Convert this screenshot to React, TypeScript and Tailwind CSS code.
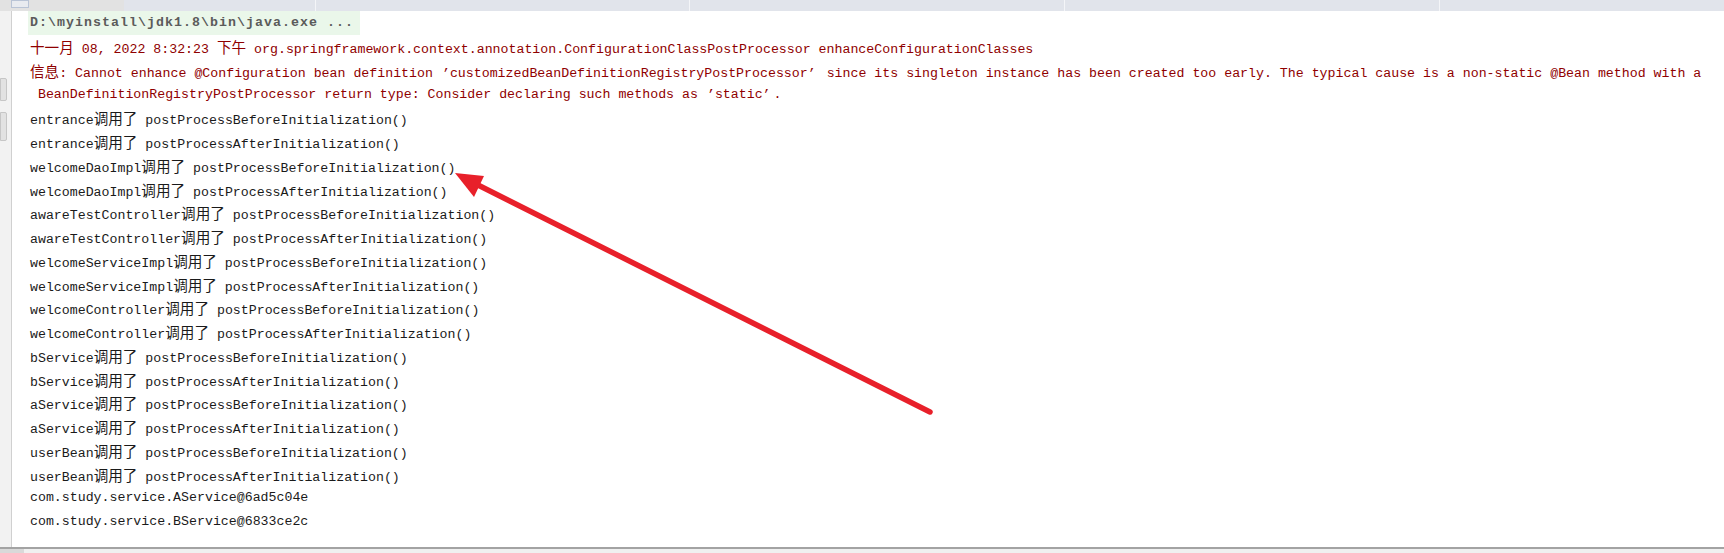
const CJK_RE = /([\u3000-\u9fff\uff00-\uffef]+|\u2018|\u2019)/;

// split a console line so that CJK runs get the wider CJK font
const Seg = ({ text }: { text: string }) => (
  <>
    {text.split(CJK_RE).map((part, i) => {
      if (i % 2 === 0) return <span key={i}>{part}</span>;
      if (part === "\u2018")
        return (
          <span key={i} className="inline-block w-[9px] text-right">
            ’
          </span>
        );
      if (part === "\u2019")
        return (
          <span key={i} className="inline-block w-[11px] text-left">
            ’
          </span>
        );
      return (
        <span key={i} className="font-['Noto_Sans_CJK_SC',sans-serif] text-[14.6px]">
          {part}
        </span>
      );
    })}
  </>
);

const redLines = [
  "十一月 08, 2022 8:32:23 下午 org.springframework.context.annotation.ConfigurationClassPostProcessor enhanceConfigurationClasses",
  "信息: Cannot enhance @Configuration bean definition \u2018customizedBeanDefinitionRegistryPostProcessor\u2019 since its singleton instance has been created too early. The typical cause is a non-static @Bean method with a",
  " BeanDefinitionRegistryPostProcessor return type: Consider declaring such methods as \u2018static\u2019.",
];

const beans = [
  "entrance",
  "welcomeDaoImpl",
  "awareTestController",
  "welcomeServiceImpl",
  "welcomeController",
  "bService",
  "aService",
  "userBean",
];

const outLines = [
  ...beans.flatMap((b) => [
    `${b}调用了 postProcessBeforeInitialization()`,
    `${b}调用了 postProcessAfterInitialization()`,
  ]),
  "com.study.service.AService@6ad5c04e",
  "com.study.service.BService@6833ce2c",
];

export default function App() {
  return (
    <div className="relative w-[1724px] h-[553px] bg-white flex flex-col overflow-hidden font-['Liberation_Mono',monospace] text-[13.25px]">
      {/* Tab strip */}
      <div className="h-[11px] flex shrink-0">
        <div className="w-[124px] bg-[#e2e2e2] pl-[11px]">
          <div className="w-[18px] h-[8px] border border-[#b9c4d6] bg-[#e8ebf0]" />
        </div>
        <div className="w-[191px] bg-[#e1e4eb]" />
        <div className="w-[374px] bg-[#e1e4eb] border-l border-[#f4f5f8]" />
        <div className="w-[375px] bg-[#e1e4eb] border-l border-[#f4f5f8]" />
        <div className="w-[375px] bg-[#e1e4eb] border-l border-[#f4f5f8]" />
        <div className="flex-1 bg-[#e1e4eb] border-l border-[#f4f5f8]" />
      </div>

      <div className="flex flex-1 min-h-0">
        {/* Left gutter */}
        <div className="w-[12px] shrink-0 bg-[#f2f2f2] border-r border-[#d0d0d0] flex flex-col">
          <div className="mt-[67px] w-[7px] h-[23px] bg-[#e2e2e2] border border-[#c6c6c6] rounded-r-[2px]" />
          <div className="mt-[11px] w-[7px] h-[29px] bg-[#e2e2e2] border border-[#c6c6c6] rounded-r-[2px]" />
        </div>

        {/* Console output */}
        <div className="flex-1 pl-[16px] flex flex-col whitespace-pre">
          <div className="w-fit h-[24px] leading-[24px] pl-[2px] pr-[6px] bg-[#eaf7ea] text-[#5b5b5b] font-bold tracking-[1.05px]">
            D:\myinstall\jdk1.8\bin\java.exe ...
          </div>
          {redLines.map((l, i) => (
            <div key={i} className="h-[23.75px] leading-[23.75px] px-[2px] text-[#8f0000]">
              <Seg text={l} />
            </div>
          ))}
          {outLines.map((l, i) => (
            <div key={i} className="h-[23.75px] leading-[23.75px] px-[2px] text-[#1a1a1a]">
              <Seg text={l} />
            </div>
          ))}
        </div>
      </div>

      {/* Bottom edge */}
      <div className="h-[6px] shrink-0 flex border-t-2 border-[#a3a3a3]">
        <div className="w-[24px] bg-[#d9d9d9]" />
        <div className="flex-1 bg-[#f0f0f0]" />
      </div>

      {/* Annotation arrow */}
      <svg
        className="absolute inset-0 pointer-events-none"
        width="1724"
        height="553"
        viewBox="0 0 1724 553"
      >
        <line x1="930" y1="412" x2="472" y2="182" stroke="#e8202a" strokeWidth="5.5" strokeLinecap="round" />
        <polygon points="455,173 484,176 474,197" fill="#e8202a" />
      </svg>
    </div>
  );
}
